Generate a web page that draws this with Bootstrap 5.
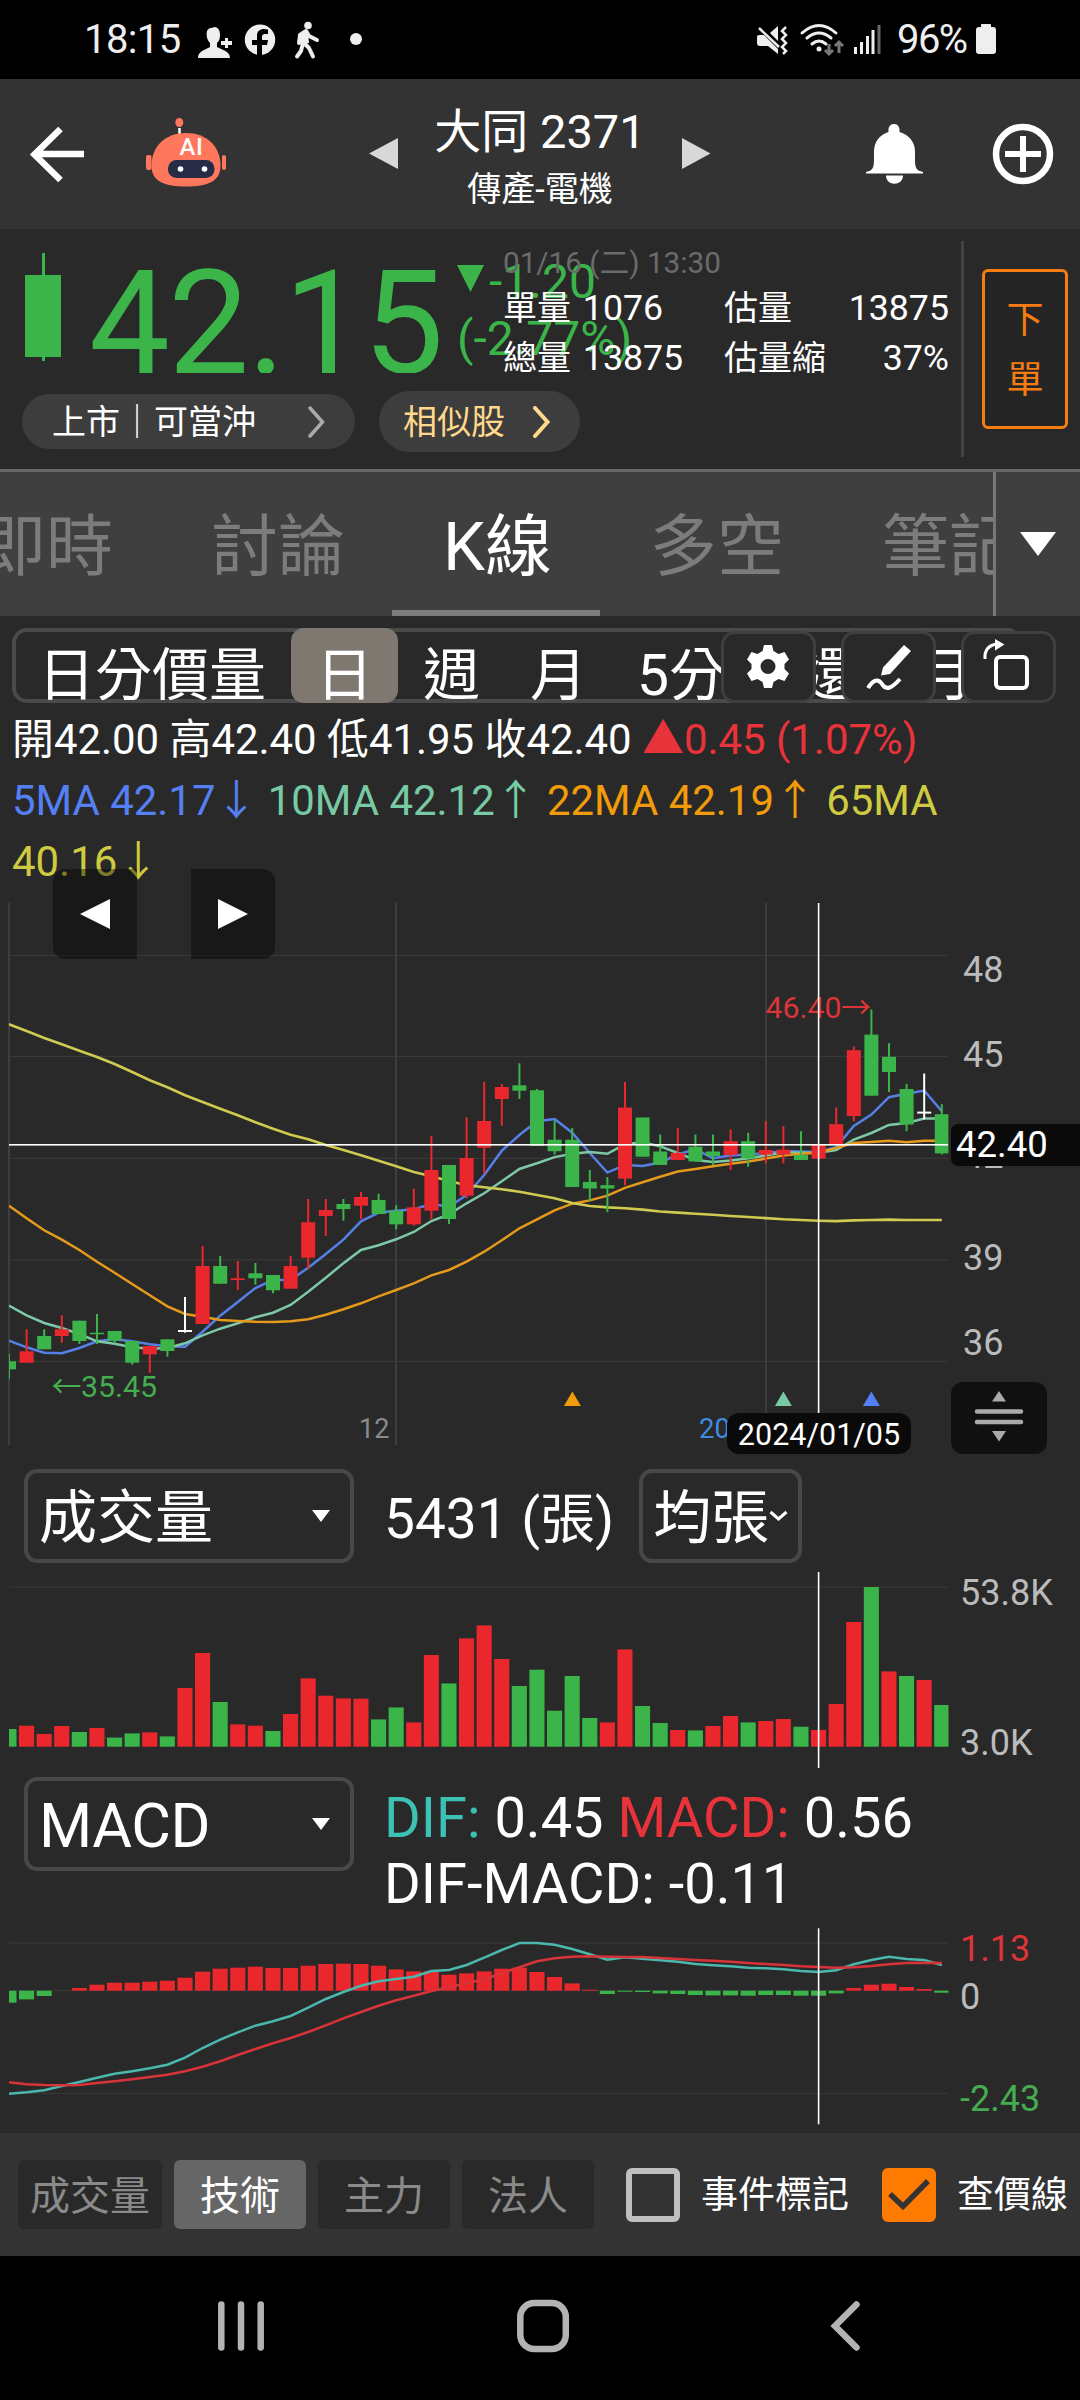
<!DOCTYPE html>
<html lang="zh-Hant">
<head>
<meta charset="utf-8">
<meta name="viewport" content="width=1080">
<title>大同 2371 K線</title>
<link href="https://cdn.jsdelivr.net/npm/bootstrap@5.3.0/dist/css/bootstrap.min.css" rel="stylesheet">
<style>
  body { font-family: Roboto, "Noto Sans CJK TC", sans-serif; background: #292929; color: #fff; width: 1080px; height: 2400px; overflow: hidden; }
  svg { display: block; flex: none; }
  .statusbar { height: 79px; background: #000; color: #eee; font-size: 40px; line-height: 79px; }
  .statusbar .clock { margin-left: 84px; width: 111px; letter-spacing: -.6px; }
  .statusbar .battery { width: 79px; margin-left: 12px; letter-spacing: -1.6px; }
  .topbar { height: 150px; background: #333; }
  .title-main { font-size: 47px; line-height: 58px; }
  .title-sub { font-size: 34px; line-height: 57px; }
  .quote { height: 240px; }
  .quote-left { width: 503px; }
  .quote-row { height: 162px; }
  .price { width: 361px; height: 144px; margin-left: 28px; font-size: 144px; line-height: 190px; letter-spacing: -1.7px; overflow: hidden; color: #3bb54a; }
  .change { margin-left: 7px; padding-top: 24px; font-size: 48px; line-height: 57px; color: #3bb54a; width: 0; }
  .pill { background: #3d3d3d; font-size: 34px; }
  .pill-market { width: 333px; height: 55px; line-height: 58px; padding: 0 30px; margin-left: 22px; }
  .pill-similar { width: 201px; height: 61px; line-height: 64px; padding: 0 30px 0 24px; margin-left: 24px; color: #ffd88c; }
  .quote-mid { width: 446px; padding-top: 13px; z-index: 1; }
  .stamp { font-size: 29.7px; line-height: 42px; color: #6b6b6b; }
  .volrow { font-size: 35.7px; line-height: 49.6px; }
  .volrow .c1 { width: 221px; }
  .volrow .cj { font-size: 34px; }
  .volrow .c1 .cj { margin-right: 3px; }
  .vrule { width: 3px; height: 216px; background: #444; margin: 12px 18px 0 12px; }
  .order-btn { width: 86px; height: 160px; margin-top: 40px; border: 3px solid #f57c10; border-radius: 6px; color: #f57c10; font-size: 37px; line-height: 60px; background: #252525; padding: 19px 0 0; }
  .maintabs { height: 147px; background: #3f3f3f; border-top: 3px solid #666; }
  .tabstrip { width: 993px; gap: 98px; font-size: 67px; line-height: 151px; height: 144px; color: #7c7c7c; overflow: hidden; }
  .tabstrip .first { margin-left: -21px; }
  .tabstrip .on { color: #fff; position: relative; height: 144px; }
  .tabstrip .on::after { content: ""; position: absolute; left: -51px; width: 208px; bottom: 0; height: 6px; background: #7d7d7d; }
  .tabmore { width: 87px; border-left: 3px solid #777; padding-left: 24px; }
  .periods { height: 93px; padding: 12px 0 0 12px; position: relative; }
  .period-strip { width: 1010px; height: 75px; border: 4px solid #4a4a4a; border-radius: 15px; font-size: 57px; line-height: 88px; }
  .period-strip span { padding: 0 25px; flex: none; height: 68px; overflow: hidden; }
  .period-strip .first { padding-left: 22px; }
  .period-strip .on { background: #7f7871; border-radius: 13px; margin: -4px 0; height: 75px; line-height: 96px; }
  .tool { position: absolute; top: 15px; width: 95px; height: 72px; background: #292929; border: 3px solid #3f3f3f; border-radius: 14px; }
  .info { height: 194px; padding-left: 12px; font-size: 41.9px; line-height: 61px; }
  .up { color: #e8333a; } .ma5 { color: #5580f5; } .ma10 { color: #78caa5; } .ma22 { color: #f29c0b; } .ma65 { color: #cfcb40; }
  .chart-area { position: relative; height: 542px; }
  .stepper { position: absolute; top: -34px; width: 84px; height: 90px; background: rgba(0,0,0,.4); }
  .stepper.prev { left: 53px; border-radius: 12px 0 0 12px; }
  .stepper.next { left: 191px; border-radius: 0 12px 12px 0; }
  .tag { position: absolute; background: #0a0a0a; white-space: nowrap; }
  .tag-price { left: 951px; top: 221px; width: 135px; height: 42px; border-radius: 7px; padding-left: 5px; font-size: 36.5px; line-height: 42px; }
  .tag-date { left: 727px; top: 510px; width: 184px; height: 41px; border-radius: 12px; font-size: 30.5px; line-height: 43px; text-align: center; }
  .resize { position: absolute; left: 951px; top: 479px; width: 96px; height: 72px; background: #101010; border-radius: 12px; }
  .ind-row { padding-left: 24px; }
  .picker { width: 330px; height: 94px; border: 4px solid #484848; border-radius: 13px; font-size: 58px; padding: 0 20px 0 11px; }
  .picker span { line-height: 86px; padding-top: 3px; }
  .picker .latin { font-size: 61px; letter-spacing: -.5px; }
  .picker-unit { width: 163px; margin-left: 25px; padding: 0 10px 0 10px; }
  .reading { font-size: 55px; margin-left: 30px; }
  .footer { height: 123px; background: #333; padding: 0 10px 0 18px; }
  .seg { height: 69px; width: 132px; line-height: 73px; font-size: 40px; background: #292929; color: #8a8a8a; border-radius: 6px; margin-right: 12px; text-align: center; }
  .seg.wide { width: 144px; }
  .seg.on { background: #666; color: #fff; }
  .tick { width: 54px; height: 54px; border: 6px solid #bfbfbf; border-radius: 6px; flex: none; }
  .tick.on { background: #ff7a00; border: 0; }
  .tick-label { font-size: 37px; line-height: 54px; padding-top: 3px; }
  .sysnav { height: 144px; background: #000; }
</style>
</head>
<body>
<div class="statusbar d-flex align-items-center">
  <div class="clock">18:15</div>
  <svg width="170" height="79" viewBox="195 0 170 79" fill="#eee">
    <path d="M198 58c0-7 7-8 12-11v-4c-3-3-4-8-3-12 2-4 6-3 8-4 4 1 5 4 5 8 0 4-1 6-3 8v4c5 3 13 4 13 11zM225 38h3v3h4v4h-4v3h-3v-3h-4v-4h4z"/>
    <circle cx="260" cy="39.7" r="15.2"/>
    <path fill="#000" d="M257 56V45h-5v-5h5v-4c0-5 3-7 7-7l4 .5v4.500h-3c-2 0-3 1-3 3v3h6l-1 5h-5v11z"/>
    <circle cx="308" cy="25.500" r="3.800"/>
    <path d="M299 43l1-8 6-4 3 5 8 4M304 35l-1 8-2 8-4 5.500M304 43l5 5 4 8.500" fill="none" stroke="#eee" stroke-width="4" stroke-linecap="round" stroke-linejoin="round"/>
    <path d="M303 32h5l1 11-6 1z"/>
    <circle cx="356" cy="39" r="6"/>
  </svg>
  <svg class="ms-auto" width="130" height="79" viewBox="756 0 130 79" fill="#eee">
    <path d="M771 33l8-7v15zM758 37q0-2 2-2h5l14 14v5l-10-8h-8q-3 0-3-3z"/>
    <path d="M760 28l20 19" stroke="#eee" stroke-width="2.500"/>
    <path d="M787 27l-4 4 4 4-4 4 4 4-4 4 4 4-3 3" fill="none" stroke="#eee" stroke-width="2.500"/>
    <path d="M803 33q17-15 34 0M808 38q12-10 24 0M813 44q7-6 14 0" fill="none" stroke="#eee" stroke-width="3" stroke-linecap="round"/>
    <circle cx="820" cy="49" r="2.500"/>
    <path d="M830 44v10m-4-4l4 4 4-4M840 53V42m-4 4l4-4 4 4" fill="none" stroke="#777" stroke-width="3"/>
    <path d="M855 47h3v7h-3zM861 42h3v12h-3zM867 36h3v18h-3zM872.500 30h3v24h-3z"/><path fill="#666" d="M878.500 25h3v29h-3z"/>
  </svg>
  <div class="battery">96%</div>
  <svg class="me-auto" style="margin-right:84px!important" width="20" height="79" viewBox="0 0 20 79"><path fill="#eee" d="M5 27V25q0-1 1-1h8q1 0 1 1v2h2q3 0 3 3v21q0 3-3 3H3q-3 0-3-3V30q0-3 3-3z"/></svg>
</div>

<header class="topbar d-flex">
  <svg width="369" height="150" viewBox="0 79 369 150">
    <path d="M60.500 129L34.500 154.500l26 25.500M34 154h50" fill="none" stroke="#fff" stroke-width="6.500"/>
    <path d="M179.500 128v12" stroke="#fff" stroke-width="2.500"/>
    <ellipse cx="179.300" cy="122.500" rx="4" ry="4.500" fill="#ff775c"/>
    <rect x="146" y="155" width="5.500" height="15" rx="2" fill="#ff775c"/><rect x="222" y="155" width="4" height="15" rx="2" fill="#ff775c"/>
    <path fill="#ff775c" d="M151.500 166c0-20 14-33 34.500-33s34.500 13 34.500 33c0 16-14 20.500-34.500 20.500s-34.500-4.500-34.500-20.500z"/>
    <text x="179.500" y="155" font-size="24" font-weight="500" letter-spacing=".5" fill="#fff">AI</text>
    <rect x="168" y="160" width="46.500" height="18" rx="8.500" fill="#262c46"/>
    <circle cx="180.500" cy="169" r="2.800" fill="#fff"/><circle cx="204.500" cy="169" r="2.800" fill="#fff"/>
  </svg>
  <svg width="29" height="150" viewBox="0 79 29 150"><path fill="#d8d8d8" d="M29 138v31L0 153.500z"/></svg>
  <div class="flex-fill text-center" style="padding-top:24px">
    <div class="title-main">大同 2371</div>
    <div class="title-sub">傳產-電機</div>
  </div>
  <svg width="398" height="150" viewBox="682 79 398 150">
    <path fill="#d8d8d8" d="M682 138v31l28.500-15.500z"/>
    <path fill="#fff" d="M894 124c4 0 6 3 5.500 8 9 3 15.500 9 15.500 20v8c0 6 1 9 3.500 10.500l4.500 1.500v1.500h-57v-1.500l4.500-1.500c2.500-1.500 3.500-4.500 3.500-10.500v-8c0-11 6-17 14.500-20-.5-5 1.500-8 5.500-8zM886 175.500h17c0 11-17 11-17 0z"/>
    <circle cx="1023" cy="154" r="27" fill="none" stroke="#fff" stroke-width="6.500"/><path d="M1005 154h36M1023 136v36" stroke="#fff" stroke-width="6"/>
  </svg>
</header>

<section class="quote d-flex">
  <div class="quote-left text-nowrap">
    <div class="quote-row d-flex">
      <svg style="margin-left:25px" width="36" height="162" viewBox="25 229 36 162"><path fill="#3bb54a" d="M25 275h36v82H25zM42 253h3v108h-3z"/></svg>
      <div class="price">42.15</div>
      <div class="change">
        <div class="d-flex"><svg width="32" height="57" viewBox="457 253 32 57"><path fill="#3bb54a" d="M457 265h27l-13.500 27z"/></svg><span>-1.20</span></div>
        <div>(-2.77%)</div>
      </div>
    </div>
    <div class="d-flex align-items-center">
      <div class="pill pill-market rounded-pill d-flex align-items-center justify-content-between flex-shrink-0"><span>上市｜可當沖</span><svg width="17" height="32" viewBox="0 0 17 32"><path d="M2 2l12.500 14L2 30" fill="none" stroke="#aaa" stroke-width="3.500" stroke-linecap="round"/></svg></div>
      <div class="pill pill-similar rounded-pill d-flex align-items-center justify-content-between flex-shrink-0"><span>相似股</span><svg width="17" height="32" viewBox="0 0 17 32"><path d="M2 2l12.500 14L2 30" fill="none" stroke="#ffd88c" stroke-width="4" stroke-linecap="round"/></svg></div>
    </div>
  </div>
  <div class="quote-mid">
    <div class="stamp">01/16 (二) 13:30</div>
    <div class="volrow d-flex"><span class="c1"><span class="cj">單量</span> 1076</span><span class="cj">估量</span><span class="ms-auto">13875</span></div>
    <div class="volrow d-flex"><span class="c1"><span class="cj">總量</span> 13875</span><span class="cj">估量縮</span><span class="ms-auto">37%</span></div>
  </div>
  <div class="vrule"></div>
  <div class="order-btn text-center">下<br>單</div>
</section>

<nav class="maintabs d-flex">
  <div class="tabstrip d-flex text-nowrap">
    <span class="first">即時</span><span>討論</span><span class="on">K線</span><span>多空</span><span>筆記</span>
  </div>
  <div class="tabmore"><svg width="36" height="144" viewBox="0 472 36 144"><path fill="#fff" d="M0 532h36l-18 24z"/></svg></div>
</nav>

<div class="periods">
  <div class="period-strip d-flex text-nowrap">
    <span class="first">日分價量</span><span class="on">日</span><span>週</span><span>月</span><span style="padding-right:51px">5分</span><span>還原月</span>
  </div>
  <div class="tool" style="left:721px"><svg width="89" height="66" viewBox="724 634 89 66">
    <path fill="#fff" fill-rule="evenodd" d="M764 645h8l1.500 6 5 3 6-2 4.500 7.500-4.500 4.500v5l4.500 4.500-4.500 7.500-6-2-5 3-1.500 6h-8l-1.500-6-5-3-6 2-4.500-7.500 4.500-4.500v-5l-4.500-4.500 4.500-7.500 6 2 5-3zM768 659a7.500 7.500 0 1 0 0 15 7.500 7.500 0 1 0 0-15z"/></svg></div>
  <div class="tool" style="left:841px"><svg width="89" height="66" viewBox="844 634 89 66">
    <path fill="#fff" d="M904 645l7 6-21 23-9 1.500 2-8z"/><path d="M868 688c5-8 10-10 14-4 4 7 10 4 18-5" fill="none" stroke="#fff" stroke-width="4"/></svg></div>
  <div class="tool" style="left:961px"><svg width="89" height="66" viewBox="964 634 89 66">
    <rect x="996" y="657" width="31" height="31" rx="4" fill="none" stroke="#fff" stroke-width="4"/><path d="M985 659q-1-13 12-15" fill="none" stroke="#fff" stroke-width="3"/><path fill="#fff" d="M995 639l9.500 5.500-9.500 6z"/></svg></div>
</div>

<div class="info text-nowrap">
  <div>開42.00 高42.40 低41.95 收42.40 <span class="up">▲0.45 (1.07%)</span></div>
  <div><span class="ma5">5MA 42.17↓</span> <span class="ma10">10MA 42.12↑</span> <span class="ma22">22MA 42.19↑</span> <span class="ma65">65MA</span></div>
  <div class="ma65">40.16↓</div>
</div>

<div class="chart-area">
  <svg id="kline" width="1080" height="542" viewBox="0 903 1080 542"></svg>
  <div class="stepper prev"><svg width="84" height="90"><path fill="#fff" d="M57 30v30L27 45z"/></svg></div>
  <div class="stepper next"><svg width="84" height="90"><path fill="#fff" d="M27 30v30l30-15z"/></svg></div>
  <div class="tag tag-price">42.40</div>
  <div class="tag tag-date">2024/01/05</div>
  <div class="resize"><svg width="96" height="72"><path fill="#aaa" d="M48 9l7 10.500H41zM48 59.500l7-10.500H41z"/><path d="M26 29.500h44M26 40h44" stroke="#aaa" stroke-width="4.500" stroke-linecap="round"/></svg></div>
</div>

<div class="ind-row d-flex" style="height:123px;padding-top:24px">
  <div class="picker d-flex justify-content-between align-items-center"><span>成交量</span><svg width="18" height="12"><path fill="#fff" d="M0 0h18l-9 12z"/></svg></div>
  <div class="reading" style="line-height:101px">5431 (張)</div>
  <div class="picker picker-unit d-flex justify-content-between align-items-center"><span>均張</span><svg width="19" height="12"><path d="M1.500 2l8 7 8-7" fill="none" stroke="#fff" stroke-width="3"/></svg></div>
</div>
<svg id="volume" width="1080" height="204" viewBox="0 1568 1080 204"></svg>

<div class="ind-row d-flex" style="height:152px;padding-top:5px">
  <div class="picker d-flex justify-content-between align-items-center"><span class="latin">MACD</span><svg width="18" height="12"><path fill="#fff" d="M0 0h18l-9 12z"/></svg></div>
  <div class="reading text-nowrap" style="font-size:56px;line-height:66px;padding-top:8px"><span style="color:#3dc1b4">DIF:</span> 0.45 <span class="up">MACD:</span> 0.56<br>DIF-MACD: -0.11</div>
</div>
<svg id="macd" width="1080" height="209" viewBox="0 1924 1080 209"></svg>

<div class="footer d-flex align-items-center text-nowrap">
  <div class="seg wide">成交量</div><div class="seg on">技術</div><div class="seg">主力</div><div class="seg">法人</div>
  <div class="tick" style="margin-left:20px"></div><div class="tick-label" style="margin-left:21px">事件標記</div>
  <div class="tick on" style="margin-left:33px"><svg width="54" height="54"><path d="M8 26l13 12.500L46 13" fill="none" stroke="#333" stroke-width="5.500"/></svg></div><div class="tick-label" style="margin-left:21px">查價線</div>
</div>
<div class="sysnav">
  <svg width="1080" height="144" viewBox="0 2256 1080 144" fill="none" stroke="#b3b3b3" stroke-width="6.500" stroke-linecap="round">
    <path d="M221.300 2304.500v43M241 2304.500v43M260.700 2304.500v43"/><rect x="520.300" y="2303" width="45.500" height="46" rx="14"/><path stroke-linejoin="miter" d="M856.500 2304.500L835 2326l21.500 21.500"/>
  </svg>
</div>

<script src="https://cdn.jsdelivr.net/npm/bootstrap@5.3.0/dist/js/bootstrap.bundle.min.js"></script>
<script>
const COL = { r: '#ea272d', g: '#3bb54a', w: '#ffffff' };
const X = i => 9 + 17.6 * i;
const rect = (x, y, w, h, c) => `<rect x="${x.toFixed(1)}" y="${y.toFixed(1)}" width="${w.toFixed(1)}" height="${h.toFixed(1)}" fill="${c}"/>`;
const line = (ys, c, w = 2.5) => `<polyline fill="none" stroke="${c}" stroke-width="${w}" points="${ys.map((y, i) => X(i).toFixed(1) + ',' + y.toFixed(1)).join(' ')}"/>`;
const text = (x, y, s, c, size, anchor = 'start') => `<text x="${x}" y="${y}" fill="${c}" font-size="${size}" text-anchor="${anchor}">${s}</text>`;
const clip = (id, y, h) => `<clipPath id="${id}"><rect x="9" y="${y}" width="939.500" height="${h}"/></clipPath>`;

// colour, high, body top, body bottom, low
const candles = [
['g',1354,1361.3,1369.3,1379.3],['r',1329.3,1351.3,1362.7,1362.7],['g',1329.3,1336,1349.3,1349.3],['r',1315.3,1329.3,1336,1342.7],['g',1320.7,1320.7,1341,1344],['g',1314,1332.7,1334,1344],
['g',1331,1331,1340.7,1342.7],['g',1341,1341,1362.7,1364.7],['r',1346,1346,1354.3,1372.7],['g',1339.3,1339.3,1351,1356.7],['w',1297,1330,1332,1332.7],['r',1246,1266,1324,1324],
['g',1256,1266,1283.7,1283.7],['r',1261,1278.3,1280,1290],['g',1263,1273.3,1278.3,1284.7],['g',1275,1275,1290.3,1293.3],['r',1256,1266,1288.7,1288.7],['r',1199,1222.3,1257.7,1269.3],
['r',1199,1210,1216,1236],['g',1199,1204,1209,1220.7],['r',1192,1197,1205.7,1219],['g',1193.7,1200,1214,1214],['g',1205.3,1210.7,1224.3,1229.3],['r',1188.7,1207.3,1224.3,1225.7],
['r',1136,1170,1210.7,1219.3],['g',1165,1165,1219,1224],['r',1117.3,1158,1195.7,1198.3],['r',1082,1121,1147.7,1174],['r',1084,1087,1099,1125.7],['g',1063.3,1085.3,1090.7,1099],
['g',1089,1090.3,1146,1146],['g',1120.5,1139.7,1151.2,1154.5],['g',1127.9,1139.7,1187,1187],['g',1170,1181.9,1188.5,1201],['g',1177,1185.2,1188.5,1212.2],['r',1082,1107.5,1178.6,1185.2],
['g',1117.5,1117.5,1156.7,1156.7],['g',1134.5,1151.5,1164.9,1164.9],['r',1127.9,1153,1160,1160],['g',1134.5,1146.7,1161.5,1161.5],['g',1134.5,1151.5,1156,1164.9],['r',1129.4,1141.2,1154.9,1170],
['g',1132.7,1141.2,1158.2,1166.7],['r',1121.2,1150,1154.5,1163.4],['r',1126,1149.7,1154.5,1163.4],['g',1131.2,1154.9,1160,1160],['r',1144.9,1144.9,1158.6,1158.6],['r',1107.5,1124.2,1144.9,1144.9],
['r',1046.5,1050.2,1116,1121.2],['g',1009.5,1034.6,1095.7,1095.7],['g',1043.2,1056.8,1072,1092],['g',1083.8,1089,1124.5,1131.2],['w',1073.5,1111.6,1113.6,1119.4],['g',1104.2,1114.2,1153.4,1154.5]];
const ma65 = [1024.3,1031,1038,1044.3,1050.7,1057,1064,1072,1080.3,1087.3,1095.3,1102,1108.7,1115.3,1122.3,1128.7,1134.7,1139.3,1145,1150,1155.3,1160.7,1166.3,1172,1176.3,1181,1185.3,1187.3,1189.3,1191.7,1195,1198.2,1203,1206,1207.4,1208.2,1209.6,1211.5,1212.6,1213.7,1214.8,1216,1217,1218.1,1219.3,1220,1220.7,1221.1,1220.4,1220,1219.6,1220,1220,1220];
const ma22 = [1205.7,1218.3,1230.3,1239.7,1250,1261.7,1272.7,1284,1295.3,1306.3,1314,1316.7,1320,1321,1321.7,1322,1321.3,1319.3,1314.7,1309.3,1303.3,1296.3,1290,1283.3,1275.3,1270,1261.7,1251.7,1240.3,1228.3,1219.3,1210.4,1203.7,1200.4,1195.6,1187.8,1182.3,1176.7,1171.5,1168.9,1166.3,1163.8,1161.5,1158.6,1155.6,1153.8,1152.7,1147.9,1143,1141.9,1140.8,1142.3,1140.8,1140.8];
const ma10 = [1305.7,1315.3,1323,1328,1334,1341.3,1343.7,1347.3,1348.7,1348,1343.3,1335.3,1328.7,1323.3,1317.3,1312.7,1305,1291.7,1277.7,1263.3,1250,1245.3,1239.3,1232,1221,1214.3,1203.3,1193.3,1181.3,1169,1163.3,1157.1,1153.8,1151.9,1153.8,1144.2,1142.3,1146.4,1153,1160,1161.9,1160.4,1158.2,1155.6,1152.3,1152.7,1152.7,1150,1139.7,1133,1124.9,1123,1118.6,1118.6];
const ma5 = [1340.7,1347.3,1352.7,1353.3,1348,1341.3,1339.3,1341.3,1344.3,1346.3,1346.7,1331.7,1315.7,1302,1288,1280,1280,1267.7,1254,1239.7,1221.3,1212.7,1210.7,1209.3,1204,1206.7,1195,1175,1150.7,1135,1121.3,1119,1132.7,1153,1172.6,1164.9,1166,1162.6,1154.5,1149.3,1158.2,1155.6,1154.5,1153,1151.2,1151.5,1151.9,1147.1,1126,1114.6,1097.2,1093.8,1090.5,1111.2];

let k = clip('ck', 903, 542);
[955.3,1056.3,1158.3,1259.7,1361.3].forEach(y => k += rect(9, y - .5, 939, 1.2, '#393939'));
[8,395,765].forEach(x => k += rect(x, 903, 2, 542, '#3d3d3d'));
k += '<g clip-path="url(#ck)">' + line(ma5, '#5580e8') + line(ma10, '#7dc8a6') + line(ma22, '#e59a1c') + line(ma65, '#cfcb50', 2.6);
candles.forEach(([c, h, t, b, l], i) => {
  k += rect(X(i) - 1, h, 2, l - h, COL[c]) + rect(X(i) - 7, t, 14, Math.max(b - t, 1.5), COL[c]);
});
k += '</g>';
[[572.4,'#f29c0b'],[783.4,'#78caa5'],[871.4,'#5580f5']].forEach(([x, c]) => k += `<path fill="${c}" d="M${x} 1391.500l8.500 14.500h-17z"/>`);
k += text(765.5, 1018, '46.40', '#dc3438', 30.3) + text(841, 1018, '→', '#dc3438', 30);
k += text(51.5, 1396.5, '←', '#45ad50', 30) + text(81, 1396.5, '35.45', '#45ad50', 30.3);
k += text(359, 1438, '12', '#8a8a8a', 27) + text(699, 1438, '2024', '#3d8de0', 27.5);
k += rect(9, 1144, 939, 1.6, '#fff') + rect(817.8, 903, 1.6, 542, '#fff');
[[48,982],[45,1067],[42,1168],[39,1269.5],[36,1355]].forEach(([v, y]) => k += text(963, y, v, '#bbb', 36));
kline.innerHTML = k;

// bar heights counted in thirds of a pixel above the base line
const vol = 'g53 r63 r38 r62 g44 r56 g27 g40 r43 g31 r176 r281 g134 r67 r63 g47 r98 r205 r153 r145 r144 g82 g118 r73 r275 g190 r325 r364 r263 g182 g231 g108 g212 g86 r73 r292 g122 g71 r50 g49 r62 r92 g73 r77 r83 g60 r50 r128 r374 g479 r226 g212 r200 g125'.split(' ');
let v = clip('cv', 1568, 204) + rect(9, 1586.5, 939, 1.2, '#373737') + rect(9, 1737.2, 939, 1.2, '#373737') + '<g clip-path="url(#cv)">';
vol.forEach((s, i) => { const h = s.slice(1) / 3; v += rect(X(i) - 7.6, 1746.7 - h, 15.1, h, COL[s[0]]); });
v += '</g>' + rect(817.8, 1572, 1.6, 196, '#fff') + text(960, 1604.7, '53.8K', '#bbb', 36) + text(960, 1754.7, '3.0K', '#bbb', 36);
volume.innerHTML = v;

const hist = [-36,-26,-16,0,8,18,24,24,27,30,39,57,66,69,72,68,68,75,80,81,80,75,64,58,58,48,52,58,66,69,56,41,22,3,-10,-3,-4,-8,-10,-13,-14,-14,-15,-13,-13,-15,-15,-8,8,18,21,11,5,-6];
const dif = [581,577,571,558,546,533,521,514,505,494,473,444,419,397,377,364,348,323,297,276,257,244,237,230,213,210,195,173,150,129,129,134,147,163,179,172,176,181,185,192,196,199,203,205,208,213,216,211,193,180,170,177,180,195];
const sig = [547,553,555,556,555,549,544,538,531,524,514,500,484,465,447,430,414,396,376,355,336,317,301,287,273,262,250,238,220,202,184,175,170,169,170,171,171,174,177,180,182,185,189,192,195,199,201,203,202,198,193,189,188,189];
let m = clip('cm', 1924, 209);
[1943,1990.7,2093.5].forEach(y => m += rect(9, y - .6, 939, 1.2, '#373737'));
m += '<g clip-path="url(#cm)">';
hist.forEach((n, i) => { const h = Math.abs(n) / 3; m += rect(X(i) - 7.6, n > 0 ? 1990.7 - h : 1990.7, 15.1, h, n > 0 ? COL.r : COL.g); });
m += line(dif.map(d => 1900 + d / 3), '#4ab8ad') + line(sig.map(d => 1900 + d / 3), '#d9333a') + '</g>' + rect(817.8, 1928.3, 1.6, 196, '#fff');
m += text(960, 1961, '1.13', '#dc3438', 36) + text(960, 2008.7, '0', '#bbb', 36) + text(960, 2110.7, '-2.43', '#45ad50', 36);
macd.innerHTML = m;
</script>
</body>
</html>
